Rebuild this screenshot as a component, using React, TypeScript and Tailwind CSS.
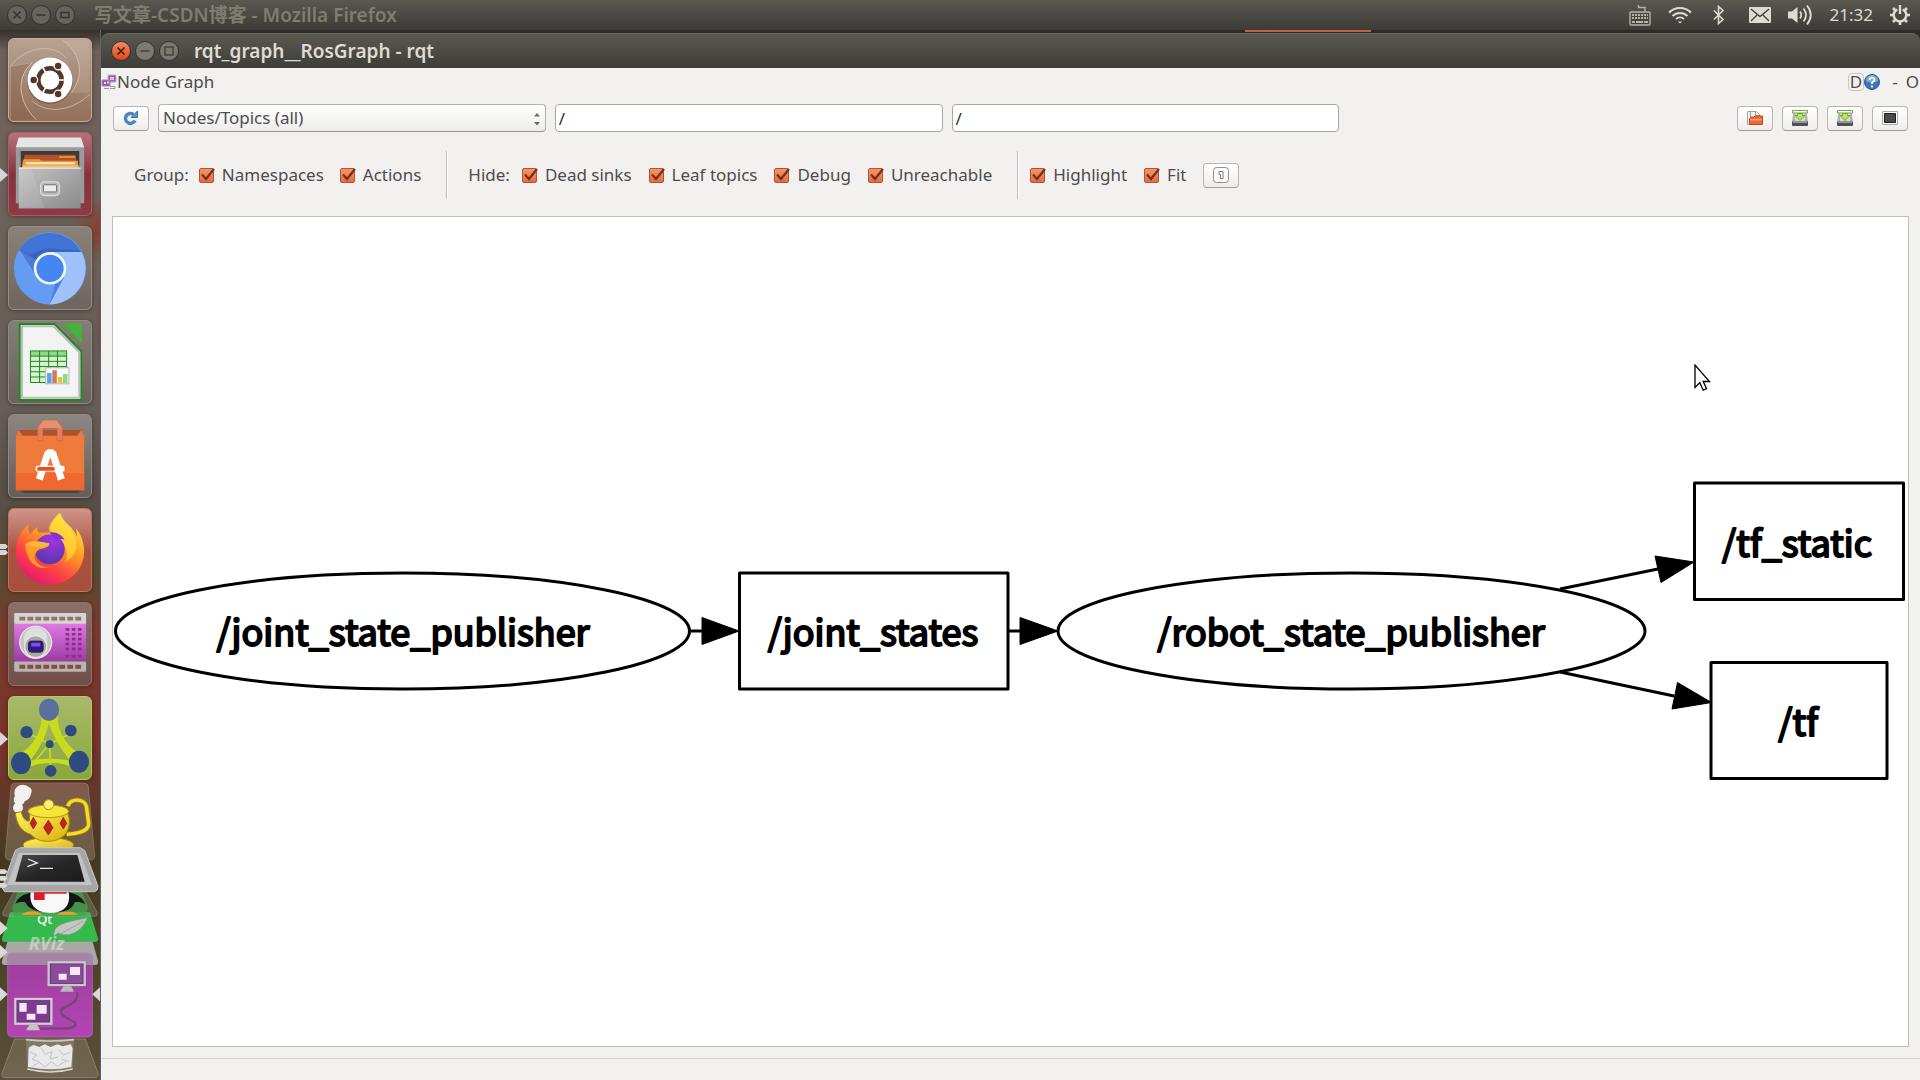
import type { ReactNode } from "react";
import { clsx } from "clsx";

const UI_FONT = "font-['Noto_Sans','Noto_Sans_CJK_SC',sans-serif]";

/* ---------- top panel ---------- */

function WindowButtons({ active }: { active?: boolean }) {
  const dim = active ? "#7b7970" : "#66645c";
  const ink = active ? "#45433d" : "#35342f";
  return (
    <div className="flex gap-1">
      <button aria-label="Close" className="block h-5 w-5">
        <svg viewBox="0 0 20 20" className="h-5 w-5">
          <defs>
            <linearGradient id="closeBtn" x1="0" y1="0" x2="0" y2="1">
              <stop offset="0" stopColor="#f58a62" />
              <stop offset="1" stopColor="#dd4814" />
            </linearGradient>
          </defs>
          <circle cx="10" cy="10" r="9.5" fill={active ? "url(#closeBtn)" : dim} stroke="#34332e" />
          <path d="M6.5 6.5l7 7M13.5 6.5l-7 7" stroke={active ? "#4a1a08" : ink} strokeWidth="1.6" />
        </svg>
      </button>
      <button aria-label="Minimize" className="block h-5 w-5">
        <svg viewBox="0 0 20 20" className="h-5 w-5">
          <circle cx="10" cy="10" r="9.5" fill={dim} stroke="#34332e" />
          <path d="M5.5 10h9" stroke={ink} strokeWidth="1.6" />
        </svg>
      </button>
      <button aria-label="Maximize" className="block h-5 w-5">
        <svg viewBox="0 0 20 20" className="h-5 w-5">
          <circle cx="10" cy="10" r="9.5" fill={dim} stroke="#34332e" />
          {active ? (
            <rect x="6" y="6" width="8" height="8" fill="none" stroke={ink} strokeWidth="1.5" />
          ) : (
            <rect x="6" y="7.5" width="8" height="5" fill="none" stroke={ink} strokeWidth="1.5" />
          )}
        </svg>
      </button>
    </div>
  );
}

function Indicators() {
  return (
    <div className="flex items-center gap-[17px] pr-[10px] text-[#dfdbd2]">
      <svg viewBox="0 0 22 22" className="h-[22px] w-[22px]" fill="none" stroke="#b5b2a9" strokeWidth="1.4">
        <path d="M9.5 1v2.500h6.500V8" />
        <rect x="1" y="8" width="20" height="13" rx="1" />
        <path d="M3 11h16M3 14h16" strokeWidth="2" strokeDasharray="2 1" />
        <path d="M3 18h3M7 18h7M15 18h4" strokeWidth="2" />
      </svg>
      <svg viewBox="0 0 24 18" className="h-[18px] w-6" fill="none" stroke="currentColor" strokeWidth="2">
        <path d="M1 6.500a15.500 15.500 0 0 1 22 0" />
        <path d="M4.500 10a10.600 10.600 0 0 1 15 0" />
        <path d="M8 13a6 6 0 0 1 8 0" />
        <path d="M9.800 15.500h4.400L12 17.500z" fill="currentColor" stroke="none" />
      </svg>
      <svg viewBox="0 0 23 20" className="h-5 w-[23px]" fill="none" stroke="currentColor" strokeWidth="1.6">
        <path d="M5 5.500l9 9-4.500 4V1.500l4.500 4-9 9" />
      </svg>
      <svg viewBox="0 0 22 16" className="h-4 w-[22px]">
        <rect width="22" height="16" rx="1" fill="currentColor" />
        <path d="M2 2l9 7.500L20 2M2 14l6-6M20 14l-6-6" fill="none" stroke="#45443f" strokeWidth="1.4" />
      </svg>
      <svg viewBox="0 0 25 22" className="h-[22px] w-[25px]" fill="none" stroke="currentColor" strokeWidth="1.800">
        <path d="M0 7.500h4L9.500 3v16L4 14.500H0z" fill="currentColor" stroke="none" />
        <path d="M12 7.500q2.500 3.500 0 7M15.500 4.500q5 6.500 0 13M19 1.500q7.500 9.500 0 19" />
      </svg>
      <time className="text-[17px]">21:32</time>
      <svg viewBox="0 0 20 20" className="h-5 w-5" fill="none" stroke="currentColor">
        <path d="M7.300 4.500a6.300 6.300 0 1 0 5.400 0" strokeWidth="2.400" />
        <path d="M10 0v9" strokeWidth="2.400" />
        <path
          d="M3 3l2.500 2.500M17 3l-2.500 2.500M0 10h3M17 10h3M3 17l2.500-2.500M17 17l-2.500-2.500M10 17v3"
          strokeWidth="2.600"
        />
      </svg>
    </div>
  );
}

/* ---------- launcher ---------- */

type Tile = { name: string; bg: string; view: string; pips?: number; art: ReactNode };

const tiles: Tile[] = [
  {
    name: "Search your computer",
    bg: "bg-linear-to-b from-[#b7a292] to-[#93705a] border-[#c9ab92]",
    view: "24 24 252 252",
    art: (
      <>
        <defs>
          <clipPath id="dashClip"><rect x="28" y="28" width="244" height="244" /></clipPath>
        </defs>
        <g clipPath="url(#dashClip)" fill="none" stroke="#dccabc" strokeWidth="3">
          <path d="M28 108C80 40 170 40 200 84" opacity=".7" />
          <path d="M190 28c60 44 64 110 26 160" opacity=".7" />
          <path d="M276 190c-60 60-140 64-180 24" opacity=".7" />
          <path d="M112 276C50 220 44 140 96 96" opacity=".7" />
          <path d="M190 28c60 44 64 110 26 160L276 190V24z" fill="#e8d8ca" opacity=".18" />
          <path d="M112 276C50 220 44 140 96 96L28 108v168z" fill="#7c563e" opacity=".3" />
        </g>
        <circle cx="150" cy="154" r="70" fill="#5c3c28" opacity=".45" />
        <circle cx="150" cy="150" r="69" fill="#fff" />
        <circle cx="150" cy="150" r="36" fill="none" stroke="#51382a" strokeWidth="14" />
        <path d="M150 150h48M150 150l-24-42M150 150l-24 42" stroke="#fff" strokeWidth="5" />
        <circle cx="150" cy="150" r="28" fill="#fff" />
        <g fill="#51382a" stroke="#fff" strokeWidth="4">
          <circle cx="100" cy="150" r="12" />
          <circle cx="175" cy="107" r="12" />
          <circle cx="175" cy="193" r="12" />
        </g>
      </>
    ),
  },
  {
    name: "Files",
    bg: "bg-linear-to-b from-[#b5727c] via-[#85323f] to-[#8e3a44] border-[#b05a66]",
    view: "24 305 252 252",
    pips: 1,
    art: (
      <>
        <defs>
          <linearGradient id="cab" x1="0" y1="0" x2="1" y2="1">
            <stop offset="0" stopColor="#c4c4c4" />
            <stop offset="1" stopColor="#8a8a8a" />
          </linearGradient>
        </defs>
        <path d="M45 346h210v175H45z" fill="#9b9b9b" />
        <path d="M54 319h191l10 30H45z" fill="#e6e6e6" />
        <path d="M60 360h180v55H60z" fill="#3a3a3a" />
        <path d="M72 372h156l8 42H64z" fill="#b4502a" />
        <path d="M178 376h50v6h-50z" fill="#d9962c" />
        <path d="M66 392l4-6h48l4 4h114v24H64z" fill="#ec9a3c" />
        <path d="M76 395h150v6H76z" fill="#fff0d0" />
        <path d="M66 404h172v10H66z" fill="#f3bf6c" />
        <path d="M54 411h190v126H54z" fill="url(#cab)" />
        <path d="M54 411h190v4H54z" fill="#eee" />
        <path d="M54 415h38l40 120H54z" fill="#fff" opacity=".1" />
        <rect x="121" y="455" width="58" height="42" rx="12" fill="#b8b8b8" stroke="#dcdcdc" strokeWidth="4" />
        <rect x="130" y="464" width="40" height="22" rx="3" fill="#ececec" stroke="#707070" strokeWidth="3" />
      </>
    ),
  },
  {
    name: "Chromium",
    bg: "bg-linear-to-b from-[#8a817a] to-[#6e655e] border-[#958d86]",
    view: "24 587 252 252",
    art: (
      <>
        <circle cx="150" cy="714" r="111" fill="#659cf3" />
        <path d="M150 714L55 657A111 111 0 0 1 246 663z" fill="#4273d6" />
        <path d="M150 664h97A111 111 0 0 1 148 825l45-84z" fill="#9fc2fa" />
        <path d="M57 657l49 78 4-44 40-27h97l-20-6-90-6-50 20z" fill="#2f55a8" opacity=".45" />
        <path d="M148 825l46-84-28 22z" fill="#3a6fd0" opacity=".6" />
        <circle cx="150" cy="714" r="46" fill="#4587f2" stroke="#f4f6fa" strokeWidth="8" />
      </>
    ),
  },
  {
    name: "LibreOffice Calc",
    bg: "bg-linear-to-b from-[#857d77] to-[#6a635d] border-[#918a84]",
    view: "24 30 252 252",
    art: (
      <>
        <path d="M57 39h106l83 84v150H57z" fill="#fafafa" stroke="#1c8a1c" strokeWidth="6" />
        <path d="M64 46h96l80 80v140H64z" fill="#f3f3f3" stroke="#b9bdb9" strokeWidth="6" />
        <path d="M186 38h62v60z" fill="#45b13a" />
        <path d="M90 122h111v97H90z" fill="#d6f3cf" />
        <path d="M90 122h111v16H90z" fill="#8fd987" />
        <path
          d="M90 122h111v97H90zM90 138h111M90 154h111M90 170h111M90 186h111M90 202h111M118 122v97M146 122v97M173 122v97"
          fill="none"
          stroke="#1b861b"
          strokeWidth="3"
        />
        <rect x="137" y="174" width="71" height="49" fill="#fff" stroke="#b5b5b5" strokeWidth="3" />
        <path d="M141 190h14v31h-14z" fill="#58a7de" />
        <path d="M157 181h14v40h-14z" fill="#cf7a58" />
        <path d="M174 202h14v19h-14z" fill="#edc13c" />
        <path d="M190 193h14v28h-14z" fill="#86dd85" />
      </>
    ),
  },
  {
    name: "Ubuntu Software",
    bg: "bg-linear-to-b from-[#8d857f] to-[#655e58] border-[#918a84]",
    view: "24 312 252 252",
    art: (
      <>
        <path d="M50 538h206l-20 14H70z" fill="#2e2722" opacity=".5" />
        <path d="M45 378l8-20h194l8 20z" fill="#b2502c" />
        <path d="M45 378l8-20 14 18zM255 378l-8-20-14 18z" fill="#e27a50" />
        <path d="M45 376h210v167H45z" fill="#ee7a3c" />
        <path d="M45 491h210v52H45z" fill="#ee692f" />
        <path d="M112 391v-44l18-19h40l18 19v44h-16v-38h-44v38z" fill="#e2805c" stroke="#c96642" strokeWidth="2" />
        <path d="M130 328h40l14 24h-68z" fill="#f09a78" opacity=".6" />
        <path d="M117 510l27-82h14l27 82" fill="none" stroke="#fff" strokeWidth="22" strokeLinejoin="bevel" />
        <rect x="106" y="468" width="89" height="18" rx="6" fill="#fff" />
        <rect x="110" y="472" width="55" height="11" rx="5" fill="#e8511c" />
      </>
    ),
  },
  {
    name: "Firefox Web Browser",
    bg: "bg-linear-to-b from-[#d0958a] via-[#aa5340] to-[#a84f3c] border-[#c4705e]",
    view: "24 594 252 252",
    pips: 2,
    art: (
      <>
        <defs>
          <linearGradient id="fox" x1=".8" y1="0" x2=".2" y2="1">
            <stop offset="0" stopColor="#fff04a" />
            <stop offset=".4" stopColor="#ff9a22" />
            <stop offset=".7" stopColor="#ff3f47" />
            <stop offset="1" stopColor="#e1107c" />
          </linearGradient>
          <radialGradient id="globe" cx=".6" cy=".2" r=".9">
            <stop offset="0" stopColor="#a433e8" />
            <stop offset="1" stopColor="#4b3ba0" />
          </radialGradient>
        </defs>
        <path
          d="M181 606c-34 28-38 48-32 60l-34 0c-4-6-6-14-1-17-12 4-20 14-24 24-6-8-8-20-5-32-26 20-40 52-40 84a105 101 0 0 0 210 0c0-26-8-52-26-72 3 10 4 18 3 26-8-32-42-40-51-73z"
          fill="url(#fox)"
        />
        <path d="M181 606c-34 28-38 60-14 74 30 16 44 44 30 76 40-20 42-60 20-94-10-16-28-32-36-56z" fill="#ffe23c" opacity=".65" />
        <circle cx="149" cy="718" r="46" fill="url(#globe)" />
        <path d="M149 666c24-4 38 10 46 22-14-4-22-2-28 2z" fill="#8a2fd8" />
        <path d="M74 702c20-14 42-10 74-2 2 8-10 14-24 17-14 2-18 12-22 22 4 26 28 38 52 32-36 14-76-6-80-69z" fill="#ff9a2a" />
        <path d="M74 702c20-14 42-10 74-2-6 12-30 12-44 10-12-2-22-4-30-8z" fill="#ffb83a" />
      </>
    ),
  },
  {
    name: "Kazam",
    bg: "bg-linear-to-b from-[#8d706a] to-[#6e4f49] border-[#8f6e68]",
    view: "24 37 252 252",
    art: (
      <>
        <defs>
          <linearGradient id="film" x1="0" y1="0" x2="0" y2="1">
            <stop offset="0" stopColor="#e07be6" />
            <stop offset="1" stopColor="#9a3a9f" />
          </linearGradient>
        </defs>
        <path d="M40 98h221v120H40z" fill="url(#film)" />
        <rect x="40" y="68" width="221" height="33" rx="4" fill="#d4d4d4" />
        <rect x="40" y="217" width="221" height="31" rx="4" fill="#b5b5b5" />
        <path d="M56 85h192" stroke="#8d7668" strokeWidth="12" strokeDasharray="18 6.500" />
        <path d="M56 233h192" stroke="#8c4a3a" strokeWidth="12" strokeDasharray="18 6.500" />
        <path
          d="M198 118h52M198 133h52M198 148h52M198 163h52M198 178h52M198 200h52"
          stroke="#8a2f8e"
          strokeWidth="8"
          strokeDasharray="11 8"
        />
        <circle cx="106" cy="158" r="49" fill="#c6c6c6" stroke="#e6e6e6" strokeWidth="4" />
        <circle cx="106" cy="148" r="36" fill="#dedede" />
        <circle cx="106" cy="171" r="34" fill="#a8a8a8" stroke="#e8e8e8" strokeWidth="4" />
        <rect x="84" y="154" width="45" height="34" rx="9" fill="#38148a" stroke="#2a2a3a" strokeWidth="3" />
        <rect x="92" y="159" width="28" height="12" rx="3" fill="#7a55e8" />
      </>
    ),
  },
  {
    name: "Graph tool",
    bg: "bg-linear-to-b from-[#a9b969] to-[#89a83a] border-[#b6c66e]",
    view: "24 318 252 252",
    pips: 1,
    art: (
      <>
        <path
          d="M124 370h50c-2 60 26 100 78 130l-20 42c-50-30-110-30-160 0l-28-40c52-30 82-72 80-132zM147 398c-14 52-32 82-58 116 40-8 80-8 122 0-26-36-50-70-64-116z"
          fill="#c8dc1e"
          fillRule="evenodd"
        />
        <path d="M84 430l65 32 62-30M149 462l3 84M149 462l-44 52M60 522l92-4 88 0" fill="none" stroke="#c8dc1e" strokeWidth="5" />
        <g fill="#2f4a80">
          <circle cx="78" cy="426" r="19" />
          <circle cx="214" cy="421" r="18" />
          <circle cx="149" cy="463" r="12" />
          <circle cx="152" cy="545" r="18" />
          <ellipse cx="61" cy="521" rx="31" ry="34" />
          <ellipse cx="239" cy="517" rx="31" ry="34" />
        </g>
        <ellipse cx="147" cy="357" rx="31" ry="34" fill="#5b6f9c" />
      </>
    ),
  },
];

function LauncherTile({ tile }: { tile: Tile }) {
  return (
    <button aria-label={tile.name} className="relative flex w-full justify-center">
      <svg
        viewBox={tile.view}
        className={clsx("h-[84px] w-[84px] rounded-md border shadow-[0_1px_5px_rgba(0,0,0,0.35)]", tile.bg)}
      >
        {tile.art}
      </svg>
      {tile.pips === 1 && (
        <span className="absolute top-9 left-0 h-3.5 w-2 bg-[#d8d6d4] [clip-path:polygon(0_0,100%_50%,0_100%)]" />
      )}
      {tile.pips === 2 && (
        <span className="absolute top-9 left-0 flex flex-col gap-px">
          <span className="h-[5px] w-2 bg-[#d8d6d4] [clip-path:polygon(0_0,70%_0,100%_50%,70%_100%,0_100%)]" />
          <span className="h-[5px] w-2 bg-[#d8d6d4] [clip-path:polygon(0_0,70%_0,100%_50%,70%_100%,0_100%)]" />
        </span>
      )}
    </button>
  );
}

// Lower launcher entries, tilted and overlapping each other
function FoldedStack() {
  return (
    <svg viewBox="0 3 300 897" className="h-[299px] w-[100px] shrink-0">
      <defs>
        <linearGradient id="pot" x1="0" y1="0" x2="1" y2="1">
          <stop offset="0" stopColor="#fdf65a" />
          <stop offset="1" stopColor="#dcae10" />
        </linearGradient>
        <linearGradient id="term" x1="0" y1="0" x2="1" y2="1">
          <stop offset="0" stopColor="#4a4a4a" />
          <stop offset=".5" stopColor="#262626" />
          <stop offset="1" stopColor="#1c1c1c" />
        </linearGradient>
        <linearGradient id="rqt" x1="0" y1="0" x2="0" y2="1">
          <stop offset="0" stopColor="#9c3f9c" />
          <stop offset="1" stopColor="#b344b3" />
        </linearGradient>
      </defs>

      <path d="M46 12h206q12 0 13 12l19 205q1 14-12 14H28q-13 0-12-14L33 24q1-12 13-12z" fill="#c9b8a8" fillOpacity=".28" stroke="#b3a195" strokeOpacity=".6" strokeWidth="2" />
      <g fill="#f1f1f1">
        <circle cx="68" cy="42" r="25" />
        <circle cx="58" cy="62" r="17" />
        <circle cx="54" cy="86" r="15" />
        <circle cx="82" cy="36" r="13" />
      </g>
      <path d="M204 82c4-26 54-26 56 6l6 46c0 26-40 30-66 32" fill="none" stroke="#a98400" strokeWidth="15" />
      <path d="M204 82c4-26 54-26 56 6l6 46c0 26-40 30-66 32" fill="none" stroke="#f3dc2c" strokeWidth="10" />
      <ellipse cx="145" cy="198" rx="76" ry="22" fill="url(#pot)" stroke="#a98400" strokeWidth="3" />
      <path d="M46 102l18-4c4 20 14 30 24 28 0-14 2-24 6-32h104c14 20 14 52-2 72-26 28-80 28-104 0-28-8-42-30-46-64z" fill="url(#pot)" stroke="#a98400" strokeWidth="3" />
      <ellipse cx="145" cy="97" rx="61" ry="19" fill="#f7e63a" stroke="#b99508" strokeWidth="3" />
      <circle cx="146" cy="77" r="15" fill="#fbf07a" stroke="#b99508" strokeWidth="3" />
      <path d="M145 124l14 22-14 22-14-22zM100 115l10 18-10 17-10-17zM190 115l10 18-10 17-10-17z" fill="#c91f24" stroke="#7c1210" strokeWidth="2" />

      <path d="M30 400h240l24 78q2 11-9 11H15q-11 0-9-11z" fill="#35b84c" />
      <text x="134" y="434" textAnchor="middle" fill="#fff" className="font-['Noto_Sans',sans-serif] text-[40px] font-medium">
        Qt
      </text>
      <path d="M42 338h216l34 62q2 12-8 12H16q-10 0-8-12z" fill="#8b9b80" fillOpacity=".35" stroke="#a9a596" strokeOpacity=".6" strokeWidth="2" />
      <path d="M36 384l18-46h192l18 46-8 28H42z" fill="#3aa84c" opacity=".7" />
      <path d="M46 374c10-28 38-30 52-36h106c20 6 44 14 52 38-14-8-24-8-32-6-8 24-30 30-72 30s-68-10-76-30c-10-2-20-2-30 4z" fill="#141414" />
      <path d="M92 340h114c8 44-20 62-54 62-40 0-66-20-60-62z" fill="#f8f8f8" />
      <path d="M102 338h32v25h-32zM134 338h66v6h-66z" fill="#d9202a" />
      <path d="M64 407c14-14 50-14 62 0zM172 407c14-14 48-12 62 0z" fill="#f0a020" />
      <path d="M162 472c-4-40 40-42 100-56-14 40-54 62-88 46z" fill="#c3c7c2" stroke="#8f938e" strokeWidth="2" />
      <path d="M166 474c30-20 56-30 84-48" fill="none" stroke="#8f938e" strokeWidth="2" />

      <path d="M22 488h256l16 58q2 12-9 12H15q-11 0-9-12z" fill="#a8a8a6" />
      <text x="140" y="512" textAnchor="middle" fill="#e2e2e2" fillOpacity=".6" className="font-['Noto_Sans',sans-serif] text-[54px] font-bold italic">
        RViz
      </text>

      <path d="M62 206h178l14 8 40 108q0 14-10 16H14l-8-12 40-112z" fill="#a6a6a6" stroke="#c6c6c6" strokeWidth="3" />
      <path d="M56 222h184l36 96H22z" fill="#c2c2c2" />
      <path d="M68 228h164l22 80H46z" fill="url(#term)" />
      <path d="M84 240l28 12-30 11M120 268h39" fill="none" stroke="#e6e6e6" strokeWidth="4" />

      <rect x="23" y="522" width="254" height="252" rx="14" fill="url(#rqt)" stroke="#c76cc7" strokeWidth="2" />
      <path d="M24 558h252v-24q0-12-12-12H36q-12 0-12 12z" fill="#a8a3a8" opacity=".7" />
      <path d="M230 640c14 40-60 40-46 64 14 18 50 22 42 36-10 14-60 6-106 10" fill="none" stroke="#6b4a70" strokeWidth="6" />
      <rect x="146" y="550" width="108" height="68" fill="#5c2a6e" stroke="#c9c9c9" strokeWidth="7" />
      <path d="M152 556h96v56h-96z" fill="#8c4a9c" />
      <path d="M210 564h30v24h-30zM176 584h24v18h-24z" fill="#f6e6f8" />
      <path d="M190 622h24l8 16h-42z" fill="#b9b9b9" />
      <rect x="46" y="660" width="108" height="74" fill="#5c2a6e" stroke="#cfcfcf" strokeWidth="7" />
      <path d="M52 666h96v62H52z" fill="#7d3a90" />
      <path d="M58 672h22v26H58zM110 678h30v26h-30zM80 704h26v18H80z" fill="#f6e6f8" />
      <path d="M88 738h24l8 16H78z" fill="#c4c4c4" />

      <path d="M44 780h212l38 102q2 14-10 14H16q-12 0-10-14z" fill="#b8a890" fillOpacity=".25" stroke="#b5a893" strokeOpacity=".7" strokeWidth="2" />
      <path d="M78 782h144l-4 88q-68 18-136 0z" fill="#d8d8d8" fillOpacity=".2" />
      <path d="M78 782q72 8 144 0" fill="none" stroke="#c9c9c9" strokeWidth="5" />
      <path d="M86 806l14-8 18 6 16-8 18 8 20-8 16 6 24-6 6 12-4 56q-60 14-130 0z" fill="#e9e9e9" />
      <path
        d="M92 820l18 8-14 12 24 10M124 808l12 18 20-8-6 22 24-6M176 812l14 16 20-8M98 862l20-12 16 14 20-16 18 14 26-16M184 840l24 8"
        fill="none"
        stroke="#c2c2c2"
        strokeWidth="3"
      />
      <path d="M82 870q68 18 136 0" fill="none" stroke="#d5d5d5" strokeWidth="4" />

      <g fill="#dcdad8">
        <path d="M0 271h15l8 7-8 7H0zM0 291h15l8 7-8 7H0zM0 312h15l8 7-8 7H0z" />
        <path d="M0 427l23 21-23 21zM0 498l23 21-23 21zM0 625l23 21-23 21zM300 625l-23 21 23 21z" />
      </g>
    </svg>
  );
}

function Launcher() {
  return (
    <nav
      aria-label="Launcher"
      className="flex w-[101px] shrink-0 flex-col gap-[10px] overflow-hidden border-r border-[#5c6470] bg-[radial-gradient(circle_at_105%_19%,#8a3a26_0,#8a3a2600_4%),radial-gradient(ellipse_at_105%_28%,#7c2f20_0,#7c2f2000_6%),linear-gradient(to_bottom,#372f2a_0,#6f6159_2%,#6d625a_18%,#665d56_36%,#584f47_44%,#5a4a30_52%,#7a3a2c_57%,#7a3328_68%,#5c3a28_74%,#44391f_79%,#4b4326_88%,#58503a_100%)] pt-2"
    >
      {tiles.map((tile) => (
        <LauncherTile key={tile.name} tile={tile} />
      ))}
      <div className="-mt-[10px]">
        <FoldedStack />
      </div>
    </nav>
  );
}

/* ---------- rqt window ---------- */

function ToolButton({ label, children }: { label: string; children: ReactNode }) {
  return (
    <button
      aria-label={label}
      className="flex h-[25px] w-9 shrink-0 items-center justify-center rounded-[4px] border border-[#b9b6b2] border-b-[#a09d99] bg-linear-to-b from-white to-[#eeedeb]"
    >
      <svg viewBox="0 0 16 16" className="h-4 w-4">
        {children}
      </svg>
    </button>
  );
}

function SaveIcon() {
  return (
    <>
      <path d="M1.500 2h13l1.500 10H0z" fill="#b4b4b4" />
      <path d="M3 3h10v8H3z" fill="#dcdcdc" />
      <path d="M0 11.500h16V15q0 1-1 1H1q-1 0-1-1z" fill="#505050" />
      <path d="M1 11.500h14V13H1z" fill="#9a9a9a" />
      <path d="M.500.500h15v2.500H.500z" fill="#f6faf2" stroke="#6fa84a" />
      <path d="M5.500 3.500h5v2h2.500L8 10.500 3 5.500h2.500z" fill="#bfe05a" stroke="#73a62e" />
    </>
  );
}

function Check({ label }: { label: string }) {
  return (
    <label className="flex items-center gap-2">
      <span className="relative flex">
        <input
          type="checkbox"
          defaultChecked
          className="peer h-[15px] w-[15px] appearance-none rounded-[2px] border border-[#b3532f] bg-linear-to-b from-[#f7926b] to-[#ea6a3b]"
        />
        <svg viewBox="0 0 16 15" className="pointer-events-none absolute top-0 left-0 hidden h-[15px] w-4 peer-checked:block">
          <path d="M3 6.500l4 4.500L15 1" fill="none" stroke="#6b3420" strokeWidth="2.200" />
        </svg>
      </span>
      {label}
    </label>
  );
}

function Divider() {
  return <div className="h-12 w-0.5 shrink-0 border-r border-l border-l-[#c2bfbc] border-r-white" />;
}

const nodeLabels = [
  { text: "/joint_state_publisher", x: 403, y: 646 },
  { text: "/joint_states", x: 873, y: 646 },
  { text: "/robot_state_publisher", x: 1351, y: 646 },
  { text: "/tf_static", x: 1797, y: 557 },
  { text: "/tf", x: 1798, y: 736 },
];

function NodeGraph() {
  return (
    <svg viewBox="113 217 1795 829" className="h-full w-full" role="img" aria-label="Node graph">
      <g fill="none" stroke="#000" strokeWidth="3" strokeLinejoin="round">
        <ellipse cx="402.500" cy="631" rx="287" ry="58" />
        <rect x="739.500" y="573" width="268.500" height="116" />
        <ellipse cx="1351.500" cy="631" rx="293.500" ry="58" />
        <rect x="1694.500" y="483" width="209" height="116.500" />
        <rect x="1711" y="662.500" width="176" height="116" />
        <path d="M690 631h14M1008 631h14M1560 589l98-20M1560 672l114 24" />
      </g>
      <path
        d="M702 617.500l37 13.500-37 13.500zM1020 617.500l38 13.500-38 13.500zM1655 556l39 6-33 20.500zM1677.500 682.500l34 20-39.500 6.500z"
        stroke="#000"
      />
      <g
        textAnchor="middle"
        stroke="#000"
        strokeWidth="2"
        strokeLinejoin="round"
        className="font-['Noto_Sans_CJK_SC',sans-serif] text-[36px]"
      >
        {nodeLabels.map((n) => (
          <text key={n.text} x={n.x} y={n.y}>
            {n.text}
          </text>
        ))}
      </g>
    </svg>
  );
}

function DockTitle() {
  return (
    <div className="flex h-7 items-center justify-between">
      <h2 className="flex items-center">
        <svg viewBox="0 0 16 16" className="h-4 w-4">
          <path d="M7 1h8v7H7z" fill="#9c5aac" stroke="#b9b9b9" />
          <path d="M9 3h4v3H9z" fill="#e2bce8" />
          <path d="M1 6h8v6H1z" fill="#9c4aac" stroke="#9a9a9a" />
          <path d="M3 8h2v2H3zM6 7.500h2v2H6z" fill="#f3d6f6" />
          <path d="M3 14.500h5M9 12.500h5v2H9" fill="none" stroke="#9a9a9a" />
        </svg>
        Node Graph
      </h2>
      <div className="flex items-center">
        <button className="rounded-sm border border-[#c9c6c2] px-px leading-4">D</button>
        <button aria-label="Help" className="mr-3">
          <svg viewBox="0 0 16 16" className="h-4 w-4">
            <circle cx="8" cy="8" r="7.500" fill="#3a77b5" stroke="#2a5c92" />
            <path d="M2 7a6 6 0 0 1 12 0q-6 3-12 0z" fill="#7fabd6" />
            <path d="M5.500 6q.300-2.500 2.500-2.500T10.500 5.800Q10.500 7 8 8.500V10M8 11.500v2" fill="none" stroke="#fff" strokeWidth="1.700" />
          </svg>
        </button>
        <button className="mr-2">-</button>
        <button className="pr-px">O</button>
      </div>
    </div>
  );
}

function Toolbar() {
  return (
    <div className="flex items-center gap-[9px] px-3 pt-2">
      <ToolButton label="Refresh">
        <path d="M12 10.500a5 5 0 1 1-1.500-6" fill="none" stroke="#4a86c4" strokeWidth="3.400" />
        <path d="M14.500 1v6.500H8z" fill="#5f98d0" stroke="#3a74b0" />
      </ToolButton>
      <div className="relative min-w-0 flex-[388]">
        <select
          aria-label="Graph type"
          className="block h-7 w-full appearance-none rounded-[4px] border border-[#b5b2ae] border-b-[#9a9793] bg-linear-to-b from-white to-[#edecea] px-1 text-[#4c4c4c]"
        >
          <option>Nodes/Topics (all)</option>
        </select>
        <svg viewBox="0 0 6 14" className="pointer-events-none absolute top-2 right-1.5 h-3.5 w-1.5" fill="#6a6a6a">
          <path d="M3 1l3 3.500H0zM3 13.500L0 10h6z" />
        </svg>
      </div>
      {["Namespace filter", "Topic filter"].map((name) => (
        <div key={name} className="min-w-0 flex-[388]">
          <input
            aria-label={name}
            defaultValue="/"
            className="block h-7 w-full rounded-[4px] border border-[#a9a6a2] bg-white px-[3px] text-[#2f2f2f]"
          />
        </div>
      ))}
      <div className="flex-[380]" />
      <ToolButton label="Load">
        <path d="M.500 1.500h9l3 3v10H.500z" fill="#f4f4f4" stroke="#a5a5a5" />
        <path d="M3.500 1.500v6M8.500 1v4.500h4.500" fill="none" stroke="#9a9a9a" />
        <path d="M2.500 8.500l1.500-1.500h3l1-1h7.500v8.500h-13z" fill="#ee6a35" stroke="#c4481c" />
        <path d="M3 9h12v1.500H3z" fill="#f79a70" />
      </ToolButton>
      <ToolButton label="Save as DOT">
        <SaveIcon />
      </ToolButton>
      <ToolButton label="Save as SVG">
        <SaveIcon />
      </ToolButton>
      <ToolButton label="Save as image">
        <path d="M.500 1.500h15v13H.500z" fill="#fff" stroke="#a9a9a9" />
        <path d="M2.500 3.500h11v9h-11z" fill="#4a4a4a" stroke="#1e1e1e" />
      </ToolButton>
    </div>
  );
}

function Filters() {
  return (
    <div className="flex items-center gap-[17px] pt-[19px] pl-[33px] whitespace-nowrap">
      <div className="flex items-center gap-4 pr-2">
        <div className="flex gap-[10px]">
          Group:
          <Check label="Namespaces" />
        </div>
        <Check label="Actions" />
      </div>
      <Divider />
      <div className="flex items-center gap-[17px] pr-2 pl-[3px]">
        <div className="flex gap-3">
          Hide:
          <Check label="Dead sinks" />
        </div>
        <Check label="Leaf topics" />
        <Check label="Debug" />
        <Check label="Unreachable" />
      </div>
      <div className="flex items-center gap-[11px]">
        <Divider />
        <Check label="Highlight" />
      </div>
      <Check label="Fit" />
      <ToolButton label="Fit in view">
        <rect x=".5" y=".5" width="15" height="15" rx="3" fill="#fafafa" stroke="#8f8f8f" />
        <path d="M6 4.500h4v7H7.500V7.500H6z" fill="#fff" stroke="#7f7f7f" />
      </ToolButton>
    </div>
  );
}

export default function App() {
  return (
    <div className={clsx("flex h-screen flex-col overflow-hidden bg-[#2e2d29] text-[17px] leading-6 text-[#4c4c4c]", UI_FONT)}>
      <header className="flex h-[30px] shrink-0 items-center justify-between bg-linear-to-b from-[#5b584f] to-[#3c3b37]">
        <div className="flex items-center gap-[19px] pl-[7px]">
          <WindowButtons />
          <span className="text-[19px] font-semibold text-[#7f7c72]">写文章-CSDN博客 - Mozilla Firefox</span>
        </div>
        <Indicators />
      </header>

      <div className="flex min-h-0 flex-1">
        <Launcher />
        <main className="flex min-w-0 flex-1 flex-col">
          <div className="flex h-[3px] shrink-0">
            <div className="flex-[1144]" />
            <div className="h-0.5 flex-[126] bg-[#c0623f]" />
            <div className="flex-[549]" />
          </div>
          <div className="flex h-[35px] shrink-0 items-center gap-[15px] rounded-t-lg border-t border-[#6b685f] bg-linear-to-b from-[#5b584f] to-[#3e3d39] pl-[10px]">
            <WindowButtons active />
            <h1 className="text-[19px] font-semibold text-[#dfdbd2]">rqt_graph__RosGraph - rqt</h1>
          </div>
          <div className="flex min-h-0 flex-1 flex-col bg-[#f2f1f0]">
            <DockTitle />
            <Toolbar />
            <Filters />
            <div className="relative mx-[11px] mt-[17px] min-h-0 flex-1 border border-[#bfbcb9] bg-white">
              <NodeGraph />
              <svg viewBox="0 0 17 28" className="absolute top-[17.700%] left-[88.100%] h-7 w-[17px]">
                <path
                  d="M1 1v22.500l4.800-4.800 3.400 7.500 3.300-1.500-3.300-7.200H15.500z"
                  fill="#fff"
                  stroke="#000"
                  strokeWidth="1.300"
                />
              </svg>
            </div>
            <div className="mt-[11px] h-[22px] shrink-0 border-t border-[#d6d3d0]" />
          </div>
        </main>
      </div>
    </div>
  );
}
